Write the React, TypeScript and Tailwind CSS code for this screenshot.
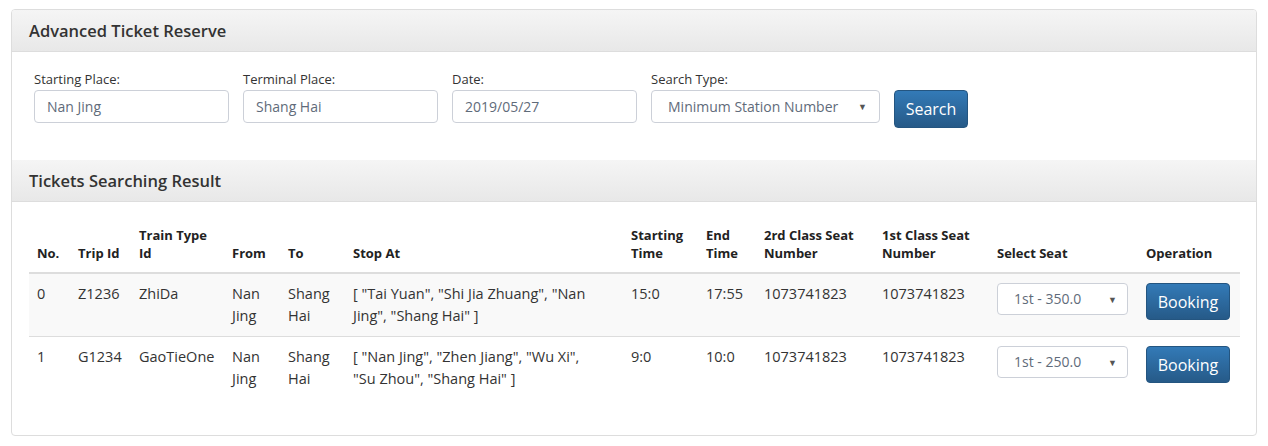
const rows = [
  {
    no: "0",
    trip: "Z1236",
    type: "ZhiDa",
    stops: '[ "Tai Yuan", "Shi Jia Zhuang", "Nan Jing", "Shang Hai" ]',
    start: "15:0",
    end: "17:55",
    seat: "1st - 350.0",
  },
  {
    no: "1",
    trip: "G1234",
    type: "GaoTieOne",
    stops: '[ "Nan Jing", "Zhen Jiang", "Wu Xi", "Su Zhou", "Shang Hai" ]',
    start: "9:0",
    end: "10:0",
    seat: "1st - 250.0",
  },
]

function Caret() {
  return <span className="text-[9px] leading-none text-[#555]">▼</span>
}

function Field({ label, value, width, select }: { label: string; value: string; width: string; select?: boolean }) {
  return (
    <div className="flex flex-col">
      <label className="mb-[2px] text-[13px] leading-[18px] text-[#333]">{label}</label>
      <div
        className={`flex h-[33px] items-center justify-between rounded-[4px] border border-[#ccd0d8] bg-white px-[12px] text-[14px] text-[#5f6b7a] ${width}`}
      >
        <span className={select ? "pl-[4px]" : ""}>{value}</span>
        {select && <Caret />}
      </div>
    </div>
  )
}

function BlueButton({ label, className }: { label: string; className: string }) {
  return (
    <button
      className={`rounded-[4px] border border-[#245580] bg-gradient-to-b from-[#337ab7] to-[#265a88] text-[16px] text-white ${className}`}
    >
      {label}
    </button>
  )
}

function PanelHeading({ title }: { title: string }) {
  return (
    <div className="border-b border-[#dddddd] bg-gradient-to-b from-[#f5f5f5] to-[#e8e8e8] px-[17px] py-[10px] text-[16.5px] font-semibold leading-[21px] text-[#333]">
      {title}
    </div>
  )
}

export default function App() {
  const th = "px-[8px] pb-[10px] pt-[7px] align-bottom text-left text-[13px] font-bold leading-[18px] text-[#222]"
  const td = "px-[8px] py-[9px] align-top text-[14.5px] leading-[22px] text-[#333]"
  return (
    <div className="h-[446px] w-[1268px] bg-white pl-[11px] pr-[11px] pt-[9px] font-['Open_Sans',sans-serif]">
      <div className="overflow-hidden rounded-[4px] border border-[#dddddd] bg-white">
        <PanelHeading title="Advanced Ticket Reserve" />
        <div className="flex items-start px-[22px] pb-[32px] pt-[18px]">
          <Field label="Starting Place:" value="Nan Jing" width="w-[195px]" />
          <div className="w-[14px]" />
          <Field label="Terminal Place:" value="Shang Hai" width="w-[195px]" />
          <div className="w-[14px]" />
          <Field label="Date:" value="2019/05/27" width="w-[185px]" />
          <div className="w-[14px]" />
          <Field label="Search Type:" value="Minimum Station Number" width="w-[229px]" select />
          <div className="w-[14px]" />
          <BlueButton label="Search" className="mt-[20px] h-[38px] w-[74px]" />
        </div>
        <PanelHeading title="Tickets Searching Result" />
        <div className="px-[17px] pb-[36px] pt-[17px]">
          <table className="w-[1211px] table-fixed border-collapse">
            <colgroup>
              <col className="w-[41px]" />
              <col className="w-[61px]" />
              <col className="w-[93px]" />
              <col className="w-[56px]" />
              <col className="w-[65px]" />
              <col className="w-[278px]" />
              <col className="w-[75px]" />
              <col className="w-[58px]" />
              <col className="w-[118px]" />
              <col className="w-[115px]" />
              <col className="w-[149px]" />
              <col className="w-[102px]" />
            </colgroup>
            <thead>
              <tr className="border-b-2 border-[#dddddd]">
                <th className={th}>No.</th>
                <th className={th}>Trip Id</th>
                <th className={th}>Train Type Id</th>
                <th className={th}>From</th>
                <th className={th}>To</th>
                <th className={th}>Stop At</th>
                <th className={th}>Starting Time</th>
                <th className={th}>End Time</th>
                <th className={th}>2rd Class Seat Number</th>
                <th className={th}>1st Class Seat Number</th>
                <th className={th}>Select Seat</th>
                <th className={th}>Operation</th>
              </tr>
            </thead>
            <tbody>
              {rows.map((r, i) => (
                <tr key={r.no} className={`border-t border-[#dddddd] ${i % 2 === 0 ? "bg-[#f9f9f9]" : "bg-white"}`}>
                  <td className={td}>{r.no}</td>
                  <td className={td}>{r.trip}</td>
                  <td className={td}>{r.type}</td>
                  <td className={td}>Nan Jing</td>
                  <td className={td}>Shang Hai</td>
                  <td className={td}>
                    <div className="w-[238px]">{r.stops}</div>
                  </td>
                  <td className={td}>{r.start}</td>
                  <td className={td}>{r.end}</td>
                  <td className={td}>1073741823</td>
                  <td className={td}>1073741823</td>
                  <td className={td}>
                    <div className="flex h-[32px] w-[131px] items-center justify-between rounded-[4px] border border-[#ccd0d8] bg-white pl-[16px] pr-[10px] text-[14px] text-[#5f6b7a]">
                      <span>{r.seat}</span>
                      <Caret />
                    </div>
                  </td>
                  <td className={td}>
                    <BlueButton label="Booking" className="h-[37px] w-[84px]" />
                  </td>
                </tr>
              ))}
            </tbody>
          </table>
        </div>
      </div>
    </div>
  )
}
